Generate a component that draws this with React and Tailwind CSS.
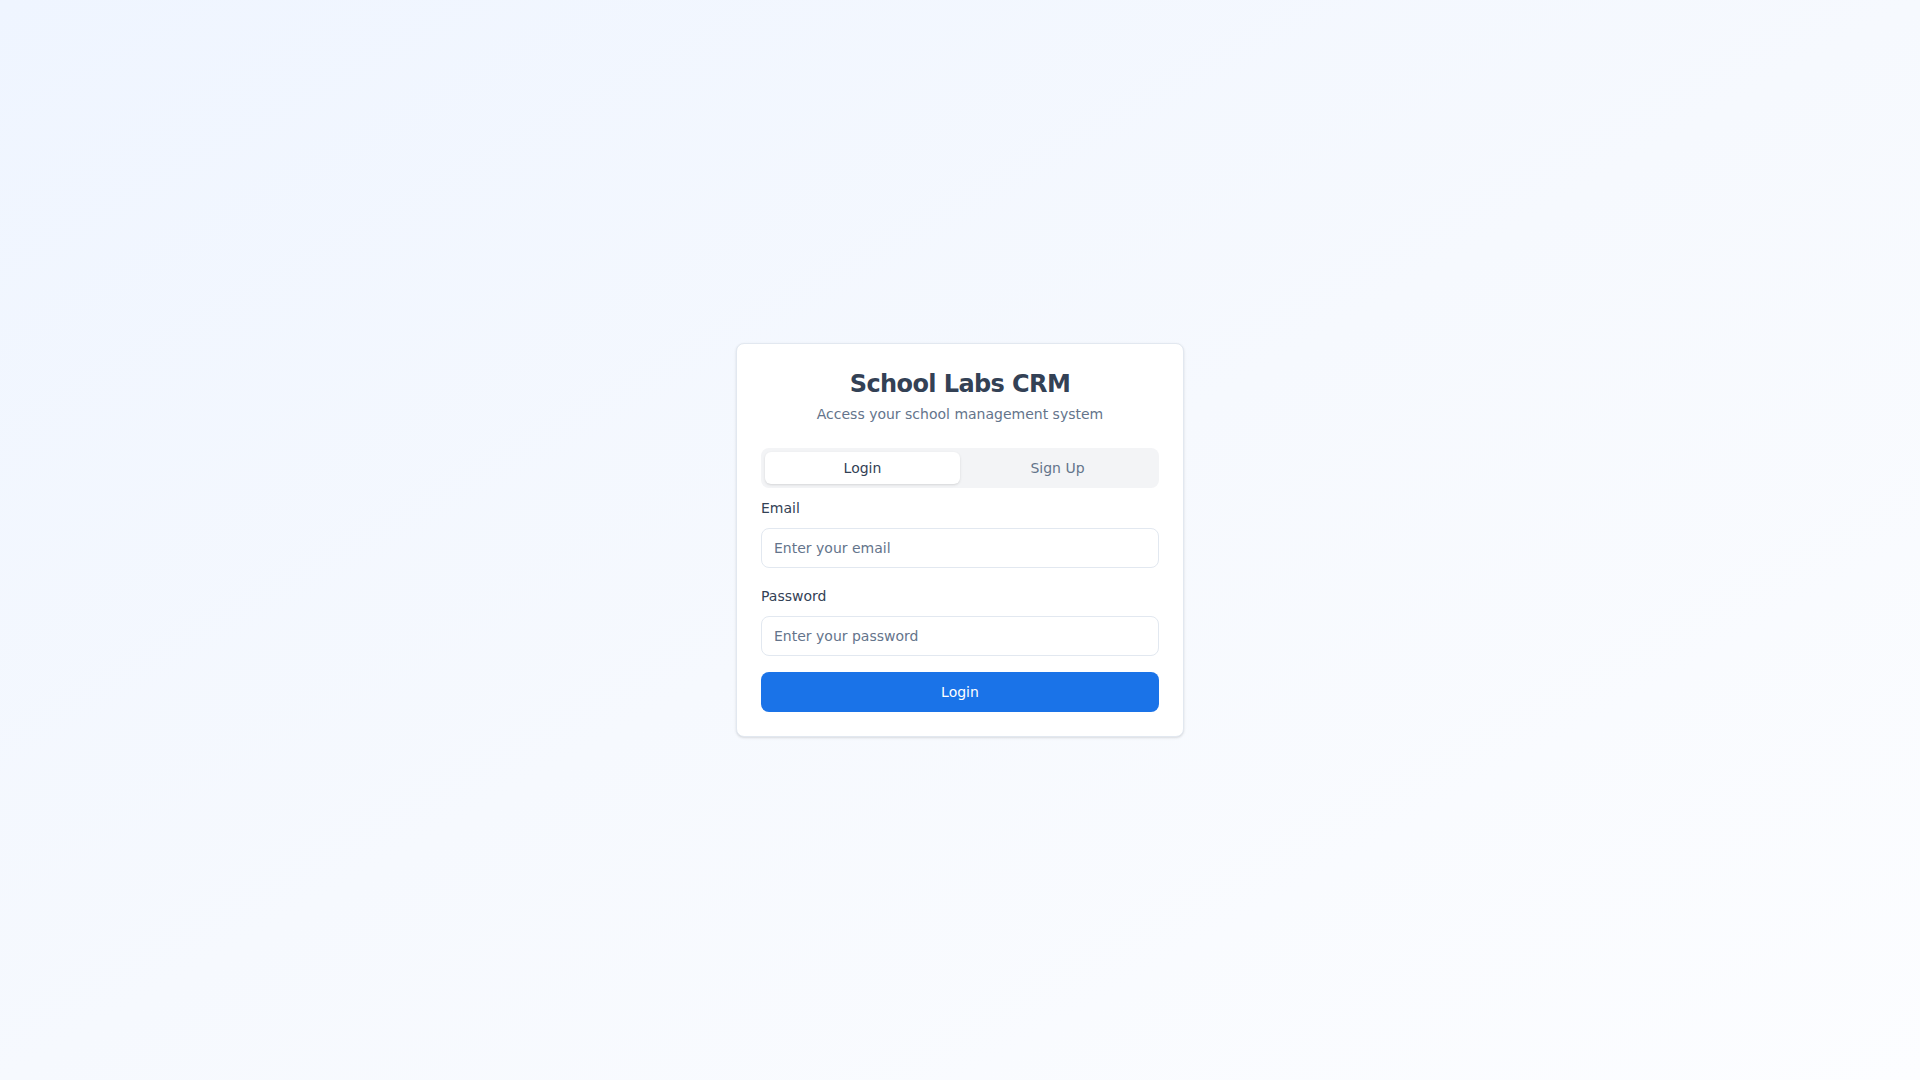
import React, { useState } from "react";

export default function App() {
  const [tab, setTab] = useState("login");
  return (
    <div
      className="min-h-screen w-full flex items-center justify-center bg-gradient-to-br from-[#eff5ff] via-[#f6f9fe] to-[#fcfdff]"
      style={{ fontFamily: '"DejaVu Sans", sans-serif' }}
    >
      <div className="w-[448px] bg-white border border-[#e2e8f0] rounded-lg shadow-sm p-6">
        <div className="text-center">
          <h1 className="text-2xl leading-8 font-bold tracking-tight text-[#334155]">School Labs CRM</h1>
          <p className="mt-1 text-sm leading-5 text-[#64748b]">Access your school management system</p>
        </div>
        <div className="mt-6 bg-[#f3f4f6] rounded-lg p-1 grid grid-cols-2 h-10">
          <button
            onClick={() => setTab("login")}
            className={
              tab === "login"
                ? "rounded-md bg-white text-sm text-[#334155] shadow-sm"
                : "rounded-md text-sm text-[#64748b]"
            }
          >
            Login
          </button>
          <button
            onClick={() => setTab("signup")}
            className={
              tab === "signup"
                ? "rounded-md bg-white text-sm text-[#334155] shadow-sm"
                : "rounded-md text-sm text-[#64748b]"
            }
          >
            Sign Up
          </button>
        </div>
        <div className="mt-[10px]">
          <label className="block text-sm leading-5 text-[#334155]">Email</label>
          <input
            type="email"
            placeholder="Enter your email"
            className="mt-[10px] block w-full h-10 rounded-lg border border-[#e2e8f0] px-3 text-sm text-[#334155] placeholder:text-[#64748b] outline-none"
          />
        </div>
        <div className="mt-[18px]">
          <label className="block text-sm leading-5 text-[#334155]">Password</label>
          <input
            type="password"
            placeholder="Enter your password"
            className="mt-[10px] block w-full h-10 rounded-lg border border-[#e2e8f0] px-3 text-sm text-[#334155] placeholder:text-[#64748b] outline-none"
          />
        </div>
        <button className="mt-4 w-full h-10 rounded-lg bg-[#1a73e8] text-sm text-white">
          Login
        </button>
      </div>
    </div>
  );
}
